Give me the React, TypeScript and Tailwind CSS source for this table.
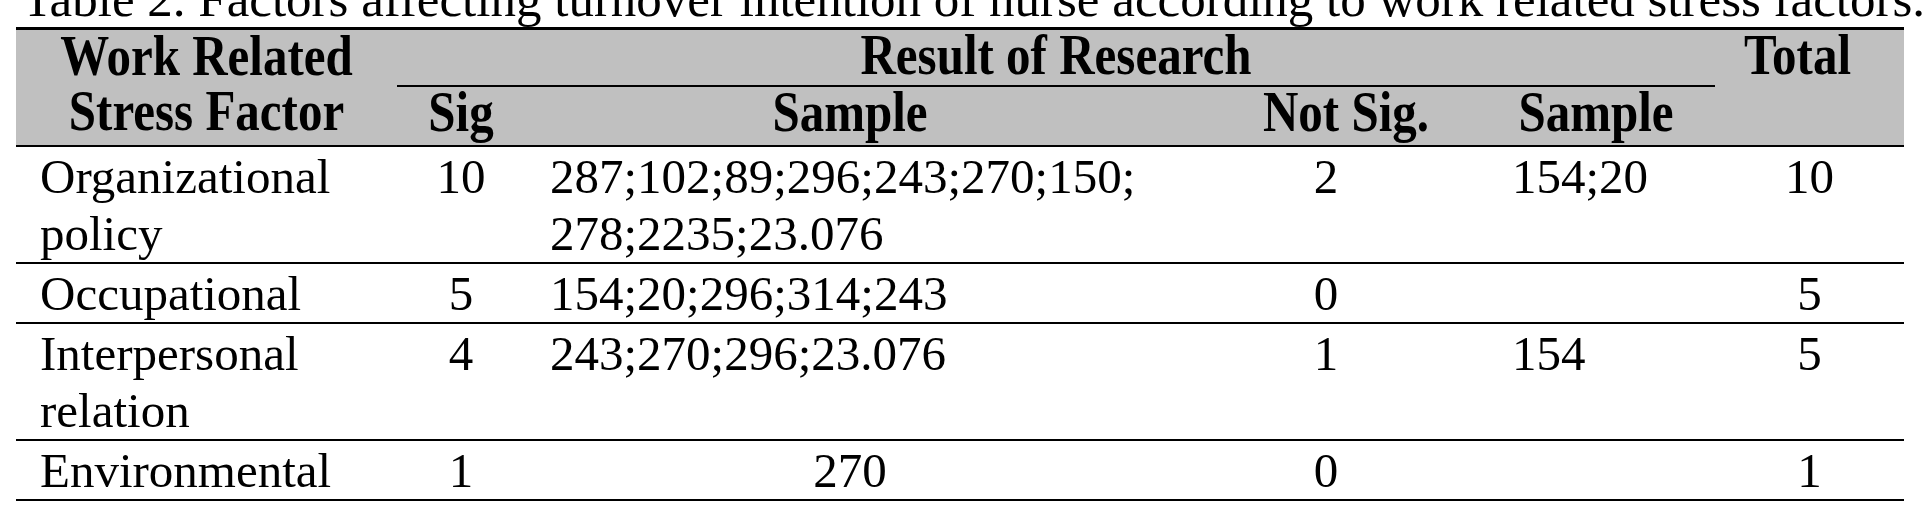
const cols = 'grid grid-cols-[381px_128px_650px_302px_238px_189px]';

const rows = [
    {
        factor: ['Organizational', 'policy'],
        sig: '10',
        sample: ['287;102;89;296;243;270;150;', '278;2235;23.076'],
        notSig: '2',
        notSample: '154;20',
        total: '10',
    },
    {
        factor: ['Occupational'],
        sig: '5',
        sample: ['154;20;296;314;243'],
        notSig: '0',
        notSample: '',
        total: '5',
    },
    {
        factor: ['Interpersonal', 'relation'],
        sig: '4',
        sample: ['243;270;296;23.076'],
        notSig: '1',
        notSample: '154',
        total: '5',
    },
    {
        factor: ['Environmental'],
        sig: '1',
        sample: ['270'],
        center: true,
        notSig: '0',
        notSample: '',
        total: '1',
    },
];

function Bold({ children }: { children: React.ReactNode }) {
    // header type in the source is set taller than plain Times bold
    return (
        <span className="inline-block scale-y-[1.17] origin-[50%_80%]">
            {children}
        </span>
    );
}

export default function App() {
    return (
        <div className="bg-white text-black font-['Liberation_Serif',serif] text-[49px] pl-[16px] w-[1927px] h-[514px] overflow-hidden">
            <p className="-mt-[29px] ml-[6px] text-[51px] leading-[56px] whitespace-nowrap">
                Table 2. Factors affecting turnover intention of nurse according to work related stress factors.
            </p>

            <div className="w-[1888px] border-t-[3px] border-black">
                {/* header */}
                <div className={`${cols} bg-[#c0c0c0] font-bold border-b-2 border-black`}>
                    <div className="row-span-2 pt-[1px] leading-[55px] text-center">
                        <Bold>Work Related</Bold>
                        <br />
                        <Bold>Stress Factor</Bold>
                    </div>
                    <div className="col-span-4 pt-[1px] leading-[54px] text-center border-b-2 border-black">
                        <Bold>Result of Research</Bold>
                    </div>
                    <div className="row-span-2 pt-[1px] leading-[54px] text-center pr-[24px]">
                        <Bold>Total</Bold>
                    </div>
                    <div className="leading-[55px] pb-[3px] text-center">
                        <Bold>Sig</Bold>
                    </div>
                    <div className="leading-[55px] pb-[3px] text-center">
                        <Bold>Sample</Bold>
                    </div>
                    <div className="leading-[55px] pb-[3px] text-center pl-[40px]">
                        <Bold>Not Sig.</Bold>
                    </div>
                    <div className="leading-[55px] pb-[3px] text-center">
                        <Bold>Sample</Bold>
                    </div>
                </div>

                {/* body */}
                {rows.map((r) => (
                    <div
                        key={r.factor[0]}
                        className={`${cols} leading-[57px] pt-[1px] border-b-2 border-black`}
                    >
                        <div className="pl-[24px]">
                            {r.factor.map((l, i) => (
                                <div key={i}>{l}</div>
                            ))}
                        </div>
                        <div className="text-center">{r.sig}</div>
                        <div className={r.center ? 'text-center' : 'pl-[25px]'}>
                            {r.sample.map((l, i) => (
                                <div key={i}>{l}</div>
                            ))}
                        </div>
                        <div className="text-center">{r.notSig}</div>
                        <div className="pl-[35px]">{r.notSample}</div>
                        <div className="text-center">{r.total}</div>
                    </div>
                ))}
            </div>
        </div>
    );
}
